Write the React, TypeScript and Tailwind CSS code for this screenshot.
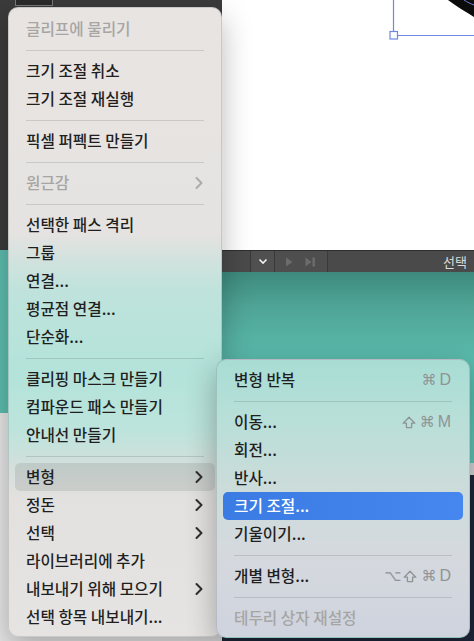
import React from 'react';
import { ChevronRight } from 'lucide-react';

type Item =
  | { sep: true }
  | { sep?: false; label: string; disabled?: boolean; sub?: boolean; active?: boolean; shortcut?: string };

const mainItems: Item[] = [
  { label: '글리프에 물리기', disabled: true },
  { sep: true },
  { label: '크기 조절 취소' },
  { label: '크기 조절 재실행' },
  { sep: true },
  { label: '픽셀 퍼펙트 만들기' },
  { sep: true },
  { label: '원근감', disabled: true, sub: true },
  { sep: true },
  { label: '선택한 패스 격리' },
  { label: '그룹' },
  { label: '연결...' },
  { label: '평균점 연결...' },
  { label: '단순화...' },
  { sep: true },
  { label: '클리핑 마스크 만들기' },
  { label: '컴파운드 패스 만들기' },
  { label: '안내선 만들기' },
  { sep: true },
  { label: '변형', sub: true, active: true },
  { label: '정돈', sub: true },
  { label: '선택', sub: true },
  { label: '라이브러리에 추가' },
  { label: '내보내기 위해 모으기', sub: true },
  { label: '선택 항목 내보내기...' },
];

const subItems: Item[] = [
  { label: '변형 반복', shortcut: '⌘D' },
  { sep: true },
  { label: '이동...', shortcut: '⇧⌘M' },
  { label: '회전...' },
  { label: '반사...' },
  { label: '크기 조절...', active: true },
  { label: '기울이기...' },
  { sep: true },
  { label: '개별 변형...', shortcut: '⌥⇧⌘D' },
  { sep: true },
  { label: '테두리 상자 재설정', disabled: true },
];

// shift key glyph, outlined arrow like macOS menus
const ShiftIcon = () => (
  <svg width="14" height="13" viewBox="0 0 14 13" className="mr-[2px]">
    <path d="M7 1.2 L12.8 7.2 H9.6 V11.6 H4.4 V7.2 H1.2 Z" fill="none" stroke="currentColor" strokeWidth="1.3" strokeLinejoin="round" />
  </svg>
);

const Shortcut: React.FC<{ keys: string }> = ({ keys }) => (
  <span className="flex items-center gap-[2px] text-[#8f9497] font-['DejaVu_Sans',sans-serif] text-[15px] font-normal">
    {keys.split('').map((k, i) =>
      k === '⇧' ? <ShiftIcon key={i} /> : <span key={i} className={k === 'D' || k === 'M' ? "font-['Liberation_Sans',sans-serif] text-[16px] ml-[1px]" : ''}>{k}</span>
    )}
  </span>
);

const MenuRow: React.FC<{ item: Item; blue?: boolean }> = ({ item, blue }) => {
  if (item.sep) {
    return (
      <div className="h-[14px] flex items-center px-[11px]">
        <div className="h-px w-full bg-black/[0.12]" />
      </div>
    );
  }
  const bg = item.active ? (blue ? 'bg-[linear-gradient(90deg,#3a7be4,#4587ee)] text-white' : 'bg-black/[0.085] text-[#1f1f1f]') : '';
  const color = item.active ? '' : item.disabled ? 'text-[#a6a5a4]' : 'text-[#1f1f1f]';
  return (
    <div className={`h-[28px] flex items-center justify-between rounded-[5px] pl-[11px] ${item.sub ? 'pr-[6px]' : 'pr-[12px]'} ${bg} ${color}`}>
      <span>{item.label}</span>
      {item.sub && (
        <ChevronRight size={20} strokeWidth={2.4} className={item.disabled ? 'text-[#acabaa]' : 'text-[#2e2e2e]'} />
      )}
      {item.shortcut && <Shortcut keys={item.shortcut} />}
    </div>
  );
};

export default function App() {
  return (
    <div className="relative w-[474px] h-[641px] overflow-hidden flex font-['Noto_Sans_CJK_KR','Noto_Sans',sans-serif] font-medium text-[15.7px]">
      {/* left column behind the menu */}
      <div className="w-[222px] flex flex-col">
        <div className="h-[250px] bg-[#3b3b3b]">
          <div className="ml-[15px] w-[38px] h-[6px] bg-[#2b2b2b] border-x border-b border-[#7a7a7a]" />
        </div>
        <div className="h-[163px] bg-[#5dbdaf]" />
        <div className="flex-1 bg-[#e6e6e6]" />
      </div>

      {/* right column: canvas, toolbar, panel */}
      <div className="flex-1 flex flex-col">
        <div className="relative h-[250px] bg-white">
          <svg className="absolute inset-0" width="252" height="250">
            <path d="M226 0 L252 0 L252 17 C244 12 234 6 226 0 Z" fill="#0b0b0b" />
            <path d="M242 0 C245 2 249 4 252 5" stroke="#6c7fd8" strokeWidth="1" fill="none" />
            <line x1="171.5" y1="0" x2="171.5" y2="31" stroke="#7089e0" strokeWidth="1.2" />
            <line x1="176" y1="35.5" x2="252" y2="35.5" stroke="#7089e0" strokeWidth="1.2" />
            <rect x="168" y="31.5" width="7.5" height="7.5" fill="#fff" stroke="#7089e0" strokeWidth="1.2" />
          </svg>
        </div>
        <div className="h-[22px] bg-[#4a4a4a] border-t border-[#2e2e2e] flex items-stretch">
          <div className="w-[28px]" />
          <div className="w-[24px] border-l border-[#3a3a3a] bg-[#505050] flex items-center justify-center">
            <svg width="10" height="7" viewBox="0 0 10 7">
              <path d="M1.5 1.5 L5 5 L8.5 1.5" stroke="#f2f2f2" strokeWidth="1.6" fill="none" />
            </svg>
          </div>
          <div className="w-[54px] border-l border-r border-[#3a3a3a] bg-[#4e4e4e] flex items-center gap-[12px] pl-[10px]">
            <svg width="8" height="10" viewBox="0 0 8 10">
              <path d="M1 0.5 L7.5 5 L1 9.5 Z" fill="#6c6c6c" />
            </svg>
            <svg width="11" height="10" viewBox="0 0 11 10">
              <path d="M0.5 0.5 L6.5 5 L0.5 9.5 Z" fill="#6c6c6c" />
              <rect x="7.5" y="0.5" width="2.4" height="9" fill="#6c6c6c" />
            </svg>
          </div>
          <div className="flex-1 flex items-center justify-end pr-[7px] text-[13px] font-normal text-[#dadada]">선택</div>
        </div>
        <div className="h-[191px] bg-[linear-gradient(180deg,#3d8a7d_0%,#4fa496_18%,#5abbac_45%,#5fc3b4_100%)]" />
        <div className="h-[12px] bg-[#cfd2d4]" />
        <div className="flex-1 bg-[#1d2739]" />
      </div>

      {/* main context menu */}
      <div className="absolute left-[8px] top-[7px] w-[214px] rounded-[10px] border border-black/[0.12] pt-[7px] pb-[5px] px-[6px] shadow-[0_10px_30px_rgba(0,0,0,0.28)] bg-[linear-gradient(180deg,#e8e4e2_0%,#e5e3e1_36%,#d2e2de_40%,#bfe3dc_45%,#b3e3da_58%,#bce4dc_67%,#d3dfdb_73%,#e2e1df_78%,#e6e4e2_100%)]">
        {mainItems.map((item, i) => (
          <MenuRow key={i} item={item} />
        ))}
      </div>

      {/* transform submenu */}
      <div className="absolute left-[216px] top-[359px] w-[254px] rounded-[10px] border border-black/[0.12] pt-[6px] pb-[5px] px-[6px] shadow-[0_10px_30px_rgba(0,0,0,0.3)] bg-[linear-gradient(180deg,#a8ddd4_0%,#b7dfd8_20%,#cbdcda_45%,#d5d9de_70%,#cfd3de_100%)]">
        {subItems.map((item, i) => (
          <MenuRow key={i} item={item} blue />
        ))}
      </div>
    </div>
  );
}
